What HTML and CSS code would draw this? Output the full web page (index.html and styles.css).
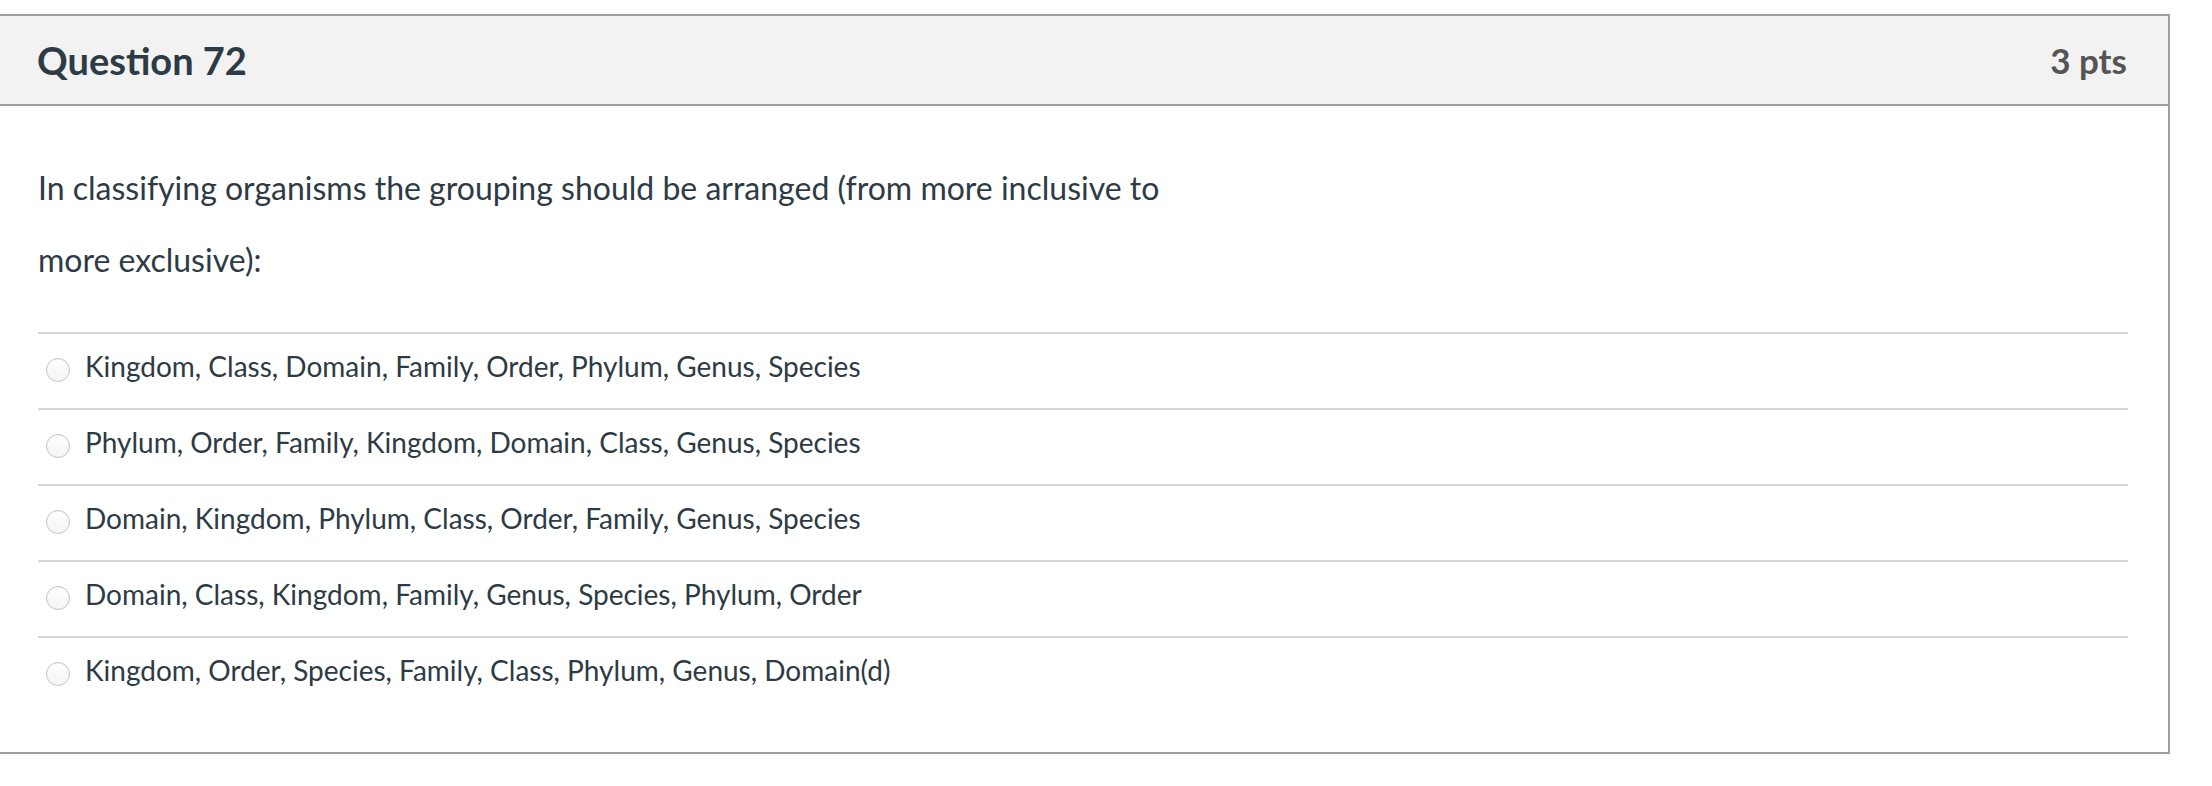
FILE: index.html
```html
<!DOCTYPE html>
<html lang="en">
<head>
<meta charset="utf-8">
<title>Question 72</title>
<link rel="stylesheet" href="styles.css">
</head>
<body>
<div class="question">
  <div class="question-header">
    <h2 class="question-name">Question 72</h2>
    <span class="question-points">3 pts</span>
  </div>
  <div class="question-body">
    <p class="question-text">In classifying organisms the grouping should be arranged (from more inclusive to<br>more exclusive):</p>
    <div class="answers">
      <label class="answer"><span class="radio"></span><span class="answer-text">Kingdom, Class, Domain, Family, Order, Phylum, Genus, Species</span></label>
      <label class="answer"><span class="radio"></span><span class="answer-text">Phylum, Order, Family, Kingdom, Domain, Class, Genus, Species</span></label>
      <label class="answer"><span class="radio"></span><span class="answer-text">Domain, Kingdom, Phylum, Class, Order, Family, Genus, Species</span></label>
      <label class="answer"><span class="radio"></span><span class="answer-text">Domain, Class, Kingdom, Family, Genus, Species, Phylum, Order</span></label>
      <label class="answer"><span class="radio"></span><span class="answer-text">Kingdom, Order, Species, Family, Class, Phylum, Genus, Domain(d)</span></label>
    </div>
  </div>
</div>
</body>
</html>
```
FILE: styles.css
```css
* { box-sizing: border-box; }
html, body { margin: 0; padding: 0; background: #ffffff; }
body {
  font-family: Lato, "Open Sans", "Liberation Sans", sans-serif;
  color: #2d3b45;
  width: 2212px;
  overflow: hidden;
}
.question {
  margin: 14px 0 0 -2px;
  width: 2172px;
  border: 2px solid #a0a0a0;
  background: #ffffff;
}
.question-header {
  height: 90px;
  background: #f2f2f2;
  border-bottom: 2px solid #a0a0a0;
  display: flex;
  align-items: center;
  justify-content: space-between;
  padding: 0 41px 0 37px;
}
.question-name {
  margin: 0;
  font-size: 38px;
  font-weight: 700;
  color: #2d3b45;
  line-height: 1;
}
.question-points {
  font-size: 35px;
  font-weight: 700;
  color: #555555;
  line-height: 1;
}
.question-body {
  padding: 46px 40px 40px 38px;
}
.question-text {
  margin: 0 0 36px 0;
  font-size: 32px;
  line-height: 72px;
  color: #2d3b45;
}
.answer {
  display: flex;
  align-items: flex-start;
  border-top: 2px solid #d7d7d7;
  height: 76px;
  padding: 16px 0 0 8px;
}
.radio {
  flex: none;
  width: 24px;
  height: 24px;
  margin: 8px 15px 0 0;
  border-radius: 50%;
  border: 1px solid #c4c4c4;
  background: linear-gradient(#ffffff, #f4f4f4);
  box-shadow: inset 0 1px 1px rgba(0,0,0,0.04);
}
.answer-text {
  font-size: 28px;
  line-height: 32px;
  color: #2d3b45;
}
```
